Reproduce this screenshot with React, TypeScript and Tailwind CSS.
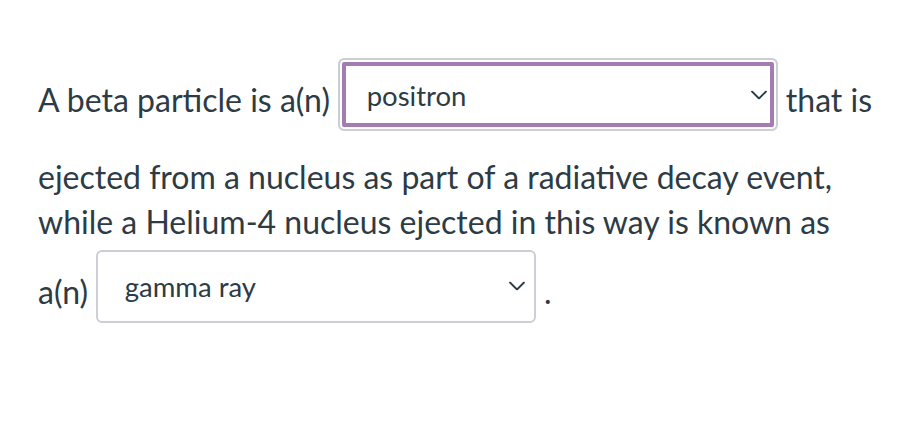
import React from 'react';

function Chevron() {
  return (
    <svg
      className="absolute right-[9px] top-1/2 -translate-y-1/2"
      width="16"
      height="9"
      viewBox="0 0 16 9"
      fill="none"
    >
      <path d="M1 1l7 7 7-7" stroke="#2d3b45" strokeWidth="1.8" strokeLinecap="round" strokeLinejoin="round" />
    </svg>
  );
}

function Select({ value, focused }: { value: string; focused?: boolean }) {
  return (
    <span
      className={`relative inline-block align-middle w-[440px] h-[73px] mt-[5px] mb-[24px] ml-[-0.5px] mr-0 rounded-[6px] border-2 border-[#cbcfd3] bg-white ${
        focused ? 'shadow-[inset_0_0_0_2px_#ffffff,inset_0_0_0_6px_#a57cb1]' : ''
      }`}
    >
      <span className="absolute left-[27px] top-1/2 -translate-y-1/2 mt-[1px] text-[27.5px] leading-none text-[#2d3b45]">
        {value}
      </span>
      <Chevron />
    </span>
  );
}

export default function App() {
  return (
    <div className="min-h-screen bg-white px-[38px] pt-[53px] font-['Lato','Noto_Sans',sans-serif] text-[32px] leading-[1.4] text-[#2d3b45]">
      <p>
        A beta particle is a(n){' '}
        <Select value="positron" focused />{' '}
        that is ejected from a nucleus as part of a radiative decay event, while a Helium-4 nucleus ejected in this way
        is known as a(n){' '}
        <Select value="gamma ray" />{' '}.
      </p>
    </div>
  );
}
